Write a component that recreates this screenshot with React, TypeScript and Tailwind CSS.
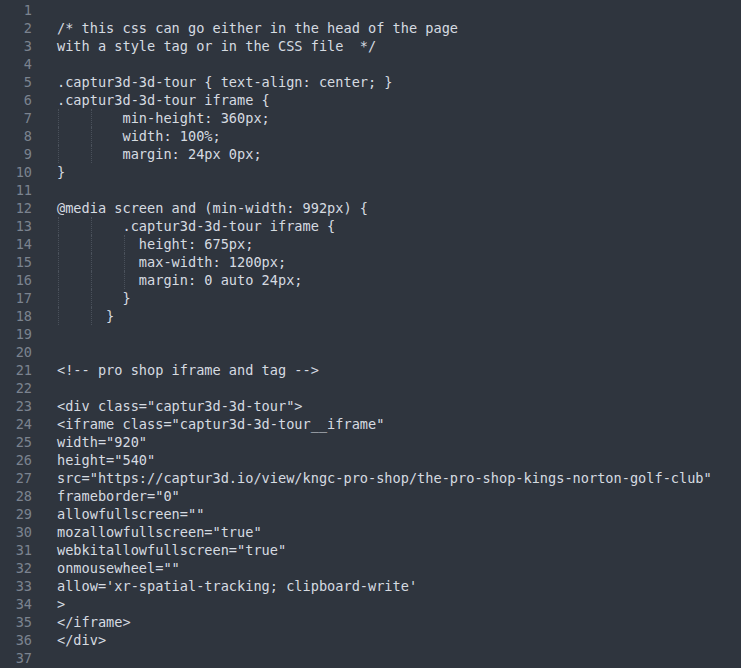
const lines: { text: string; guides?: number[] }[] = [
    { text: "" },
    { text: "/* this css can go either in the head of the page" },
    { text: "with a style tag or in the CSS file  */" },
    { text: "" },
    { text: ".captur3d-3d-tour { text-align: center; }" },
    { text: ".captur3d-3d-tour iframe {" },
    { text: "        min-height: 360px;", guides: [0, 4] },
    { text: "        width: 100%;", guides: [0, 4] },
    { text: "        margin: 24px 0px;", guides: [0, 4] },
    { text: "}" },
    { text: "" },
    { text: "@media screen and (min-width: 992px) {" },
    { text: "        .captur3d-3d-tour iframe {", guides: [0, 4] },
    { text: "          height: 675px;", guides: [0, 4, 8] },
    { text: "          max-width: 1200px;", guides: [0, 4, 8] },
    { text: "          margin: 0 auto 24px;", guides: [0, 4, 8] },
    { text: "        }", guides: [0, 4] },
    { text: "      }", guides: [0, 4] },
    { text: "" },
    { text: "" },
    { text: "<!-- pro shop iframe and tag -->" },
    { text: "" },
    { text: '<div class="captur3d-3d-tour">' },
    { text: '<iframe class="captur3d-3d-tour__iframe"' },
    { text: 'width="920"' },
    { text: 'height="540"' },
    { text: 'src="https://captur3d.io/view/kngc-pro-shop/the-pro-shop-kings-norton-golf-club"' },
    { text: 'frameborder="0"' },
    { text: 'allowfullscreen=""' },
    { text: 'mozallowfullscreen="true"' },
    { text: 'webkitallowfullscreen="true"' },
    { text: 'onmousewheel=""' },
    { text: "allow='xr-spatial-tracking; clipboard-write'" },
    { text: ">" },
    { text: "</iframe>" },
    { text: "</div>" },
    { text: "" },
];

const App = () => {
    return (
        <div className="w-[741px] h-[668px] bg-[#2f353e] overflow-hidden pt-[1px] font-['DejaVu_Sans_Mono',monospace] text-[13.6px] leading-[18px]">
            {lines.map((line, i) => (
                <div key={i} className="flex h-[18px]">
                    <div className="w-[32px] text-right text-[#7b838f] shrink-0">{i + 1}</div>
                    <div className="relative ml-[25px] whitespace-pre text-[#d6dbe1]">
                        {line.guides?.map((g) => (
                            <span
                                key={g}
                                className="absolute top-0 h-[18px] border-l border-dotted border-[#4a515b]"
                                style={{ left: g * 8.2 + 1 }}
                            />
                        ))}
                        {line.text}
                    </div>
                </div>
            ))}
        </div>
    );
};

export default App;
